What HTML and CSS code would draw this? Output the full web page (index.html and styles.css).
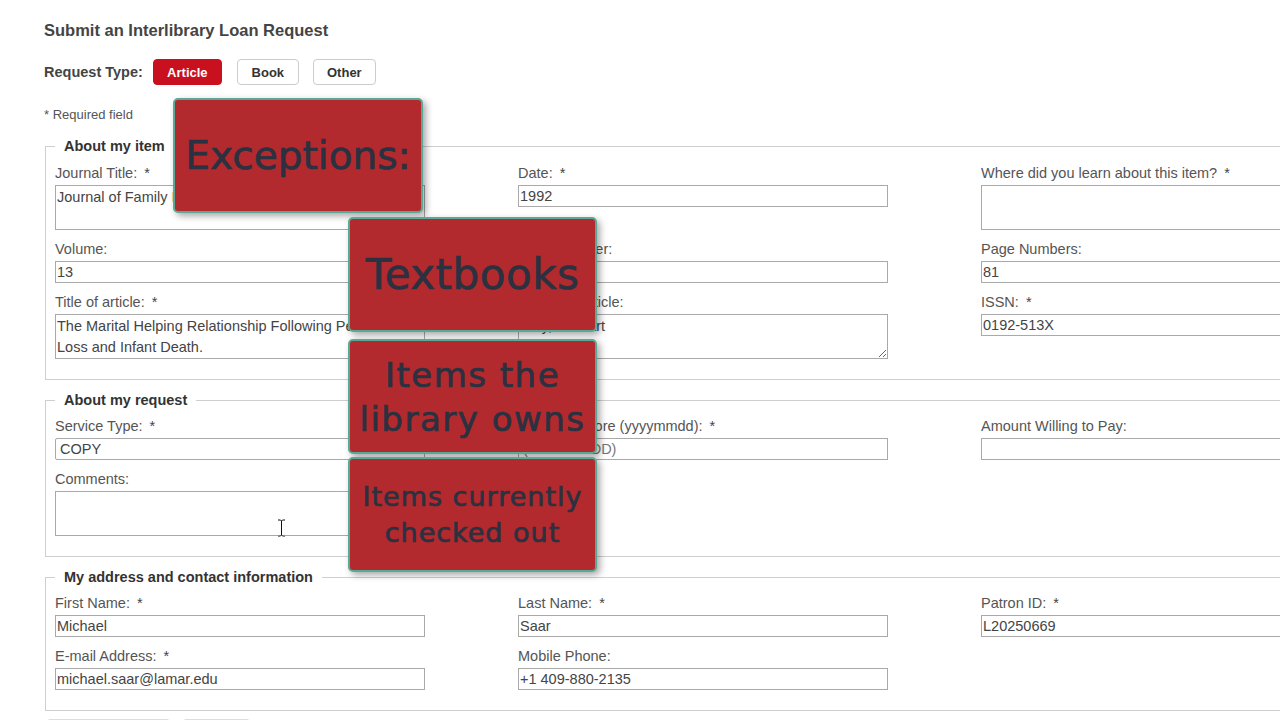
FILE: index.html
```html
<!DOCTYPE html>
<html lang="en">
<head>
<meta charset="utf-8">
<title>Submit an Interlibrary Loan Request</title>
<link rel="stylesheet" href="styles.css">
</head>
<body>
<div class="page">
  <h1 class="title">Submit an Interlibrary Loan Request</h1>
  <div class="type-row">
    <span class="type-label">Request Type:</span>
    <button class="btn btn-active btn-article" type="button">Article</button>
    <button class="btn btn-book" type="button">Book</button>
    <button class="btn btn-other" type="button">Other</button>
  </div>
  <p class="req">* Required field</p>

  <form class="form">
    <fieldset class="group group-first">
      <legend>About my item</legend>
      <div class="grid">
        <div class="field">
          <label>Journal Title:<span class="star">*</span></label>
          <textarea class="input area no-resize">Journal of Family Issues</textarea>
        </div>
        <div class="field">
          <label>Date:<span class="star">*</span></label>
          <input class="input" type="text" value="1992">
        </div>
        <div class="field">
          <label>Where did you learn about this item?<span class="star">*</span></label>
          <textarea class="input area no-resize"></textarea>
        </div>
        <div class="field">
          <label>Volume:</label>
          <input class="input" type="text" value="13">
        </div>
        <div class="field">
          <label>Issue Number:</label>
          <input class="input" type="text" value="4">
        </div>
        <div class="field">
          <label>Page Numbers:</label>
          <input class="input" type="text" value="81">
        </div>
        <div class="field">
          <label>Title of article:<span class="star">*</span></label>
          <textarea class="input area no-resize">The Marital Helping Relationship Following Perinatal
Loss and Infant Death.</textarea>
        </div>
        <div class="field">
          <label>Author of article:</label>
          <textarea class="input area">Frey, Stewart</textarea>
        </div>
        <div class="field">
          <label>ISSN:<span class="star">*</span></label>
          <input class="input" type="text" value="0192-513X">
        </div>
      </div>
    </fieldset>

    <fieldset class="group">
      <legend>About my request</legend>
      <div class="grid">
        <div class="field">
          <label>Service Type:<span class="star">*</span></label>
          <select class="input select"><option>COPY</option></select>
        </div>
        <div class="field">
          <label>Needed Before (yyyymmdd):<span class="star">*</span></label>
          <input class="input pad" type="text" placeholder="(YYYYMMDD)">
        </div>
        <div class="field">
          <label>Amount Willing to Pay:</label>
          <input class="input" type="text">
        </div>
        <div class="field">
          <label>Comments:</label>
          <textarea class="input area no-resize"></textarea>
        </div>
      </div>
    </fieldset>

    <fieldset class="group">
      <legend>My address and contact information</legend>
      <div class="grid">
        <div class="field">
          <label>First Name:<span class="star">*</span></label>
          <input class="input" type="text" value="Michael">
        </div>
        <div class="field">
          <label>Last Name:<span class="star">*</span></label>
          <input class="input" type="text" value="Saar">
        </div>
        <div class="field">
          <label>Patron ID:<span class="star">*</span></label>
          <input class="input" type="text" value="L20250669">
        </div>
        <div class="field">
          <label>E-mail Address:<span class="star">*</span></label>
          <input class="input" type="text" value="michael.saar@lamar.edu">
        </div>
        <div class="field">
          <label>Mobile Phone:</label>
          <input class="input" type="text" value="+1 409-880-2135">
        </div>
      </div>
    </fieldset>

    <div class="actions">
      <button class="act act-submit" type="button" aria-label="Submit Request"></button>
      <button class="act act-clear" type="button" aria-label="Clear"></button>
    </div>
  </form>

  <div class="note note-1">Exceptions:</div>
  <div class="note note-2">Textbooks</div>
  <div class="note note-3">Items the<br>library owns</div>
  <div class="note note-4">Items currently<br>checked out</div>

  <svg class="cursor" width="9" height="18" viewBox="0 0 9 18" aria-hidden="true">
    <path d="M1 1 H3.5 L4.5 2 L5.5 1 H8 M4.5 2 V16 M1 17 H3.5 L4.5 16 L5.5 17 H8" fill="none" stroke="#fff" stroke-width="2.4"/>
    <path d="M1 1 H3.5 L4.5 2 L5.5 1 H8 M4.5 2 V16 M1 17 H3.5 L4.5 16 L5.5 17 H8" fill="none" stroke="#111" stroke-width="1"/>
  </svg>
</div>
</body>
</html>
```

FILE: styles.css
```css
html, body {
  margin: 0;
  padding: 0;
  overflow: hidden;
  background: #fff;
}

body {
  font-family: "Liberation Sans", Arial, sans-serif;
  color: #555;
}

.page {
  position: relative;
  width: 1400px;
  height: 720px;
  padding: 20px 0 0 44px;
  box-sizing: border-box;
  overflow: hidden;
}

.title {
  margin: 0;
  font-size: 16.5px;
  line-height: 20px;
  font-weight: bold;
  color: #444;
}

.type-row {
  margin-top: 19px;
  height: 26px;
  display: flex;
  align-items: center;
}

.type-label {
  font-size: 14.5px;
  font-weight: bold;
  color: #444;
  margin-right: 10px;
}

.btn {
  height: 26px;
  padding: 0;
  border: 1px solid #ccc;
  border-radius: 4px;
  background: #fff;
  font-family: "Liberation Sans", Arial, sans-serif;
  font-size: 13px;
  font-weight: bold;
  color: #333;
  box-sizing: border-box;
}

.btn-active {
  background: #c8101f;
  border-color: #c8101f;
  color: #fff;
}

.btn-article { width: 69px; }
.btn-book { width: 62px; margin-left: 15px; }
.btn-other { width: 63px; margin-left: 14px; }

.req {
  margin: 22px 0 0;
  font-size: 13px;
  line-height: 16px;
  color: #555;
}

.form {
  margin: 0;
}

.group {
  margin: 12px 0 0 1px;
  padding: 10px 9px 20px;
  border: 1px solid #cfcfcf;
  width: 1296px;
  min-width: 0;
  box-sizing: content-box;
}

.group-first {
  margin-top: 15px;
  padding-top: 11px;
}

.group legend {
  padding: 0 9px;
  font-size: 14.5px;
  line-height: 16px;
  font-weight: bold;
  color: #333;
}

.grid {
  display: grid;
  grid-template-columns: repeat(3, 370px);
  column-gap: 93px;
  row-gap: 11px;
  align-items: start;
}

.field label {
  display: block;
  font-size: 14.5px;
  line-height: 16px;
  margin-bottom: 4px;
  color: #555;
}

.star {
  margin-left: 7px;
  color: #444;
}

.input {
  display: block;
  width: 370px;
  height: 22px;
  margin: 0;
  box-sizing: border-box;
  border: 1px solid #a9a9a9;
  border-radius: 0;
  padding: 0 1px;
  background: #fff;
  font-family: "Liberation Sans", Arial, sans-serif;
  font-size: 14.5px;
  color: #444;
  outline: none;
}

.input::placeholder {
  color: #777;
}

.pad {
  padding-left: 4px;
}

.area {
  height: 45px;
  padding: 1px 1px;
  line-height: 21px;
  overflow: hidden;
  resize: both;
}

.no-resize {
  resize: none;
}

.select {
  appearance: none;
  -webkit-appearance: none;
  border-radius: 2px;
  padding: 0 4px;
}

.actions {
  display: flex;
  margin: 8px 0 0 3px;
}

.act {
  height: 30px;
  padding: 0;
  border: 1px solid #ddd;
  border-radius: 3px;
  background: #f5f5f5;
  box-sizing: border-box;
}

.act-submit { width: 123px; }
.act-clear { width: 67px; margin-left: 13px; }

.note {
  position: absolute;
  box-sizing: border-box;
  width: 250px;
  height: 115px;
  background: #b22a2d;
  border: 2px solid #5aa896;
  border-radius: 5px;
  box-shadow: 3px 3px 7px rgba(0, 0, 0, 0.35);
  display: flex;
  align-items: center;
  justify-content: center;
  text-align: center;
  color: #2b3140;
  -webkit-text-stroke: 0.7px #2b3140;
  font-family: "DejaVu Sans", "Noto Sans", sans-serif;
  white-space: nowrap;
}

.note-1 {
  left: 173px;
  top: 98px;
  font-size: 39px;
  line-height: 44px;
}

.note-2 {
  left: 348px;
  top: 217px;
  width: 249px;
  font-size: 42px;
  letter-spacing: 0.5px;
  line-height: 48px;
}

.note-3 {
  left: 348px;
  top: 339px;
  width: 249px;
  font-size: 34px;
  letter-spacing: 1.5px;
  line-height: 44px;
}

.note-4 {
  left: 348px;
  top: 457px;
  width: 249px;
  font-size: 27px;
  letter-spacing: 1px;
  line-height: 36px;
}

.cursor {
  position: absolute;
  left: 277px;
  top: 519px;
}
```
